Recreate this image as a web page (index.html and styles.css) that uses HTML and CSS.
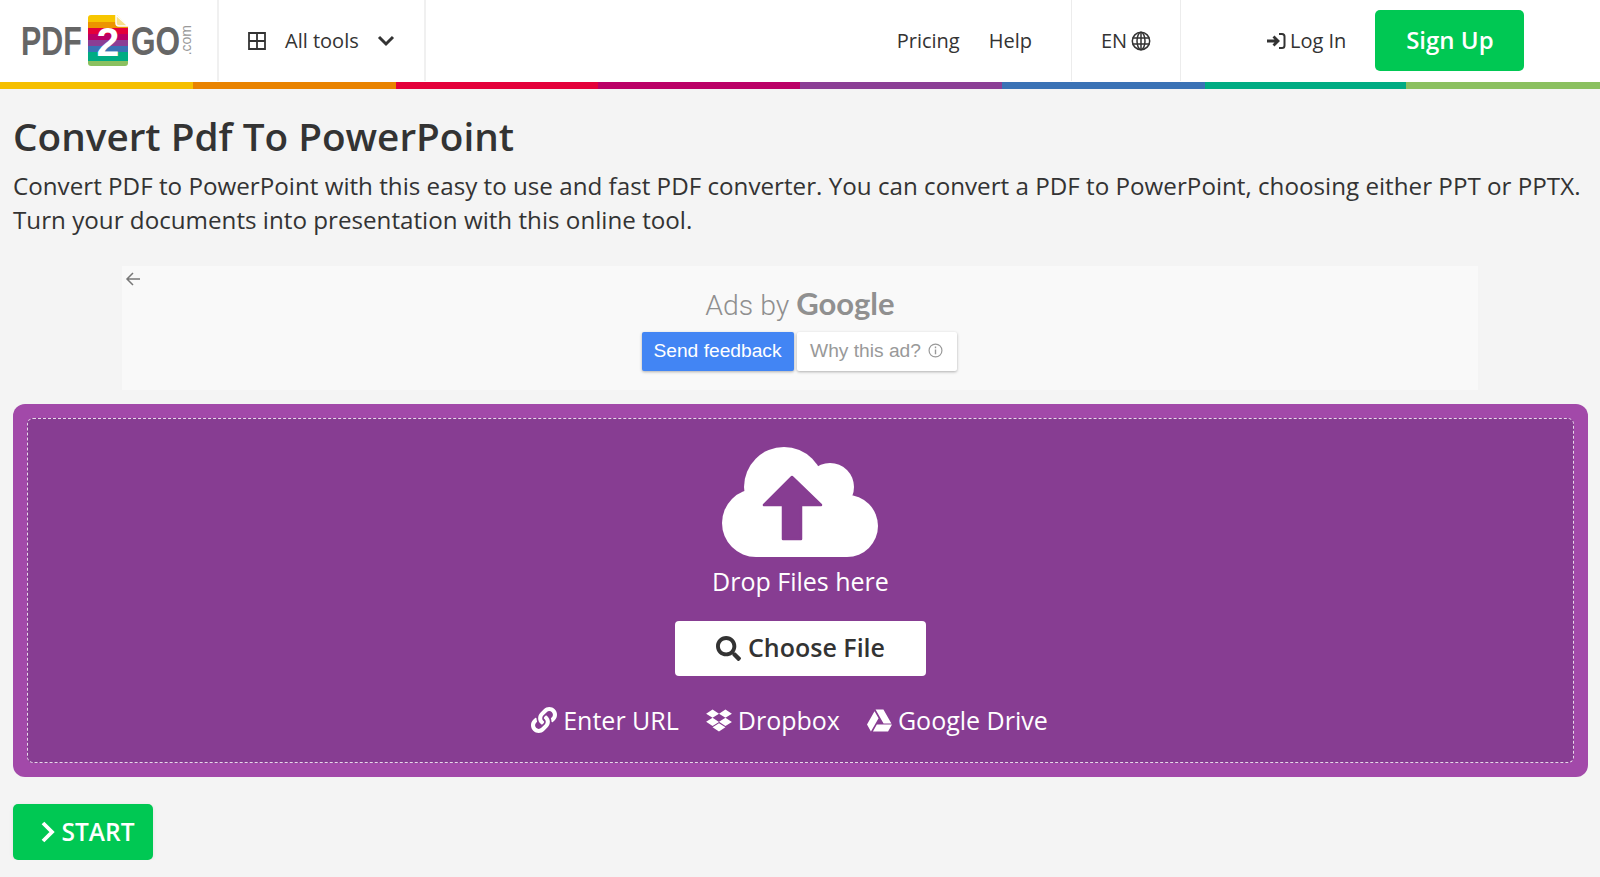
FILE: index.html
```html
<!DOCTYPE html>
<html lang="en">
<head>
<meta charset="utf-8">
<title>Convert Pdf To PowerPoint</title>
<link rel="stylesheet" href="styles.css">
</head>
<body>
<header class="topbar">
  <a class="logo-cell" href="#">
    <span class="logo-box logo-box-pdf"><span class="logo-word logo-pdf">PDF</span></span>
    <span class="logo-doc">
      <svg viewBox="0 0 40 51" width="40" height="51">
        <defs><clipPath id="doc"><path d="M0 3a3 3 0 0 1 3-3h26l11 11v37a3 3 0 0 1-3 3H3a3 3 0 0 1-3-3z"/></clipPath></defs>
        <g clip-path="url(#doc)">
          <rect width="40" height="7" fill="#f7c600"/>
          <rect y="7" width="40" height="6" fill="#ec9400"/>
          <rect y="13" width="40" height="6" fill="#e4003a"/>
          <rect y="19" width="40" height="6" fill="#bb0066"/>
          <rect y="25" width="40" height="6" fill="#8b3e95"/>
          <rect y="31" width="40" height="6" fill="#3a72b5"/>
          <rect y="37" width="40" height="9" fill="#00ac83"/>
          <rect y="46" width="40" height="5" fill="#8bc05f"/>
        </g>
        <path d="M28 0v8a3 3 0 0 0 3 3h9z" fill="#f7e08a" stroke="#fff" stroke-width="1.500"/>
      </svg>
      <span class="logo-two">2</span>
    </span>
    <span class="logo-box logo-box-go"><span class="logo-word logo-go">GO</span></span>
    <span class="logo-com">.com</span>
  </a>
  <button class="tools-cell" type="button">
    <svg class="ic-grid" viewBox="0 0 18 18" width="18" height="18"><path d="M1 1h16v16H1zM9 1v16M1 9h16" fill="none" stroke="#333" stroke-width="1.800"/></svg>
    <span>All tools</span>
    <svg class="ic-chev" viewBox="0 0 18 12" width="18" height="12"><path d="M2 2l7 7 7-7" fill="none" stroke="#333" stroke-width="3"/></svg>
  </button>
  <nav class="nav-links"><a href="#">Pricing</a><a href="#">Help</a></nav>
  <a class="lang-cell" href="#"><span class="lift">EN</span>
    <svg viewBox="0 0 20 20" width="20" height="20"><g fill="none" stroke="#333" stroke-width="1.500"><circle cx="10" cy="10" r="8.700"/><ellipse cx="10" cy="10" rx="4" ry="8.700"/><path d="M1.500 7h17M1.500 13h17M10 1.300v17.400"/></g></svg>
  </a>
  <div class="account">
    <a class="login" href="#">
      <svg viewBox="0 0 20 18" width="20" height="18"><path d="M1 9h10M7.500 4.500L12 9l-4.500 4.500" fill="none" stroke="#333" stroke-width="2.800"/><path d="M13 2h3a2.500 2.500 0 0 1 2.500 2.500v9A2.500 2.500 0 0 1 16 16h-3" fill="none" stroke="#333" stroke-width="2"/></svg>
      <span class="lift">Log In</span>
    </a>
    <a class="signup" href="#">Sign Up</a>
  </div>
</header>
<div class="stripes">
  <i class="s1"></i><i class="s2"></i><i class="s3"></i><i class="s4"></i><i class="s5"></i><i class="s6"></i><i class="s7"></i><i class="s8"></i>
</div>
<main class="content">
  <h1>Convert Pdf To PowerPoint</h1>
  <p class="lead">Convert PDF to PowerPoint with this easy to use and fast PDF converter. You can convert a PDF to PowerPoint, choosing either PPT or PPTX. Turn your documents into presentation with this online tool.</p>
  <section class="ad">
    <svg class="ad-back" viewBox="0 0 16 16" width="16" height="16"><path d="M15 8H2M8 2L2 8l6 6" fill="none" stroke="#777" stroke-width="1.500"/></svg>
    <div class="ad-title">Ads by <span>Google</span></div>
    <div class="ad-buttons">
      <button class="ad-send" type="button">Send feedback</button>
      <button class="ad-why" type="button">Why this ad?
        <svg viewBox="0 0 14 14" width="15" height="15"><circle cx="7" cy="7" r="6" fill="none" stroke="#999" stroke-width="1.100"/><path d="M7 6v4.500M7 3.300v1.500" stroke="#999" stroke-width="1.300"/></svg>
      </button>
    </div>
  </section>
  <section class="upload">
    <div class="drop">
      <svg class="cloud" viewBox="0 0 156 110" width="156" height="110">
        <g fill="#fff"><circle cx="62" cy="40" r="40"/><circle cx="108" cy="40" r="24"/><circle cx="34" cy="76" r="34"/><circle cx="125" cy="79" r="31"/><rect x="34" y="40" width="91" height="70"/></g>
        <path d="M70 30L42 58h19v34h18V58h20z" fill="#873d92" stroke="#873d92" stroke-width="2.500" stroke-linejoin="round"/>
      </svg>
      <div class="drop-label">Drop Files here</div>
      <button class="choose" type="button">
        <svg viewBox="0 0 512 512" width="25" height="25"><path fill="#333" d="M505 442.700L405.300 343c-4.500-4.500-10.600-7-17-7H372c27.600-35.300 44-79.700 44-128C416 93.100 322.900 0 208 0S0 93.100 0 208s93.100 208 208 208c48.300 0 92.700-16.400 128-44v16.300c0 6.400 2.500 12.500 7 17l99.700 99.700c9.400 9.400 24.600 9.400 33.900 0l28.300-28.300c9.400-9.400 9.400-24.600.1-34zM208 336c-70.700 0-128-57.200-128-128 0-70.700 57.200-128 128-128 70.700 0 128 57.200 128 128 0 70.700-57.200 128-128 128z"/></svg>
        <span class="lift-big">Choose File</span>
      </button>
      <div class="sources">
        <a href="#"><svg viewBox="0 0 512 512" width="26" height="26"><path fill="#fff" d="M326.612 185.391c59.747 59.809 58.927 155.698.36 214.590-.11.12-.24.25-.36.37l-67.200 67.200c-59.270 59.270-155.699 59.262-214.960 0-59.270-59.260-59.270-155.700 0-214.960l37.106-37.106c9.840-9.840 26.786-3.300 27.294 10.606.648 17.722 3.826 35.527 9.690 52.721 1.986 5.822.567 12.262-3.783 16.612l-13.087 13.087c-28.026 28.026-28.905 73.660-1.155 101.960 28.024 28.579 74.086 28.749 102.325.51l67.200-67.190c28.191-28.191 28.073-73.757 0-101.830-3.701-3.694-7.429-6.564-10.341-8.569a16.037 16.037 0 0 1-6.947-12.606c-.396-10.567 3.348-21.456 11.698-29.806l21.054-21.055c5.521-5.521 14.182-6.199 20.584-1.731a152.482 152.482 0 0 1 20.522 17.197zM467.547 44.449c-59.261-59.262-155.690-59.270-214.960 0l-67.200 67.200c-.12.12-.25.25-.36.37-58.566 58.892-59.387 154.781.36 214.590a152.454 152.454 0 0 0 20.521 17.196c6.402 4.468 15.064 3.789 20.584-1.731l21.054-21.055c8.350-8.350 12.094-19.239 11.698-29.806a16.037 16.037 0 0 0-6.947-12.606c-2.912-2.005-6.640-4.875-10.341-8.569-28.073-28.073-28.191-73.639 0-101.830l67.200-67.190c28.239-28.239 74.300-28.069 102.325.51 27.750 28.300 26.872 73.934-1.155 101.960l-13.087 13.087c-4.350 4.350-5.769 10.790-3.783 16.612 5.864 17.194 9.042 34.999 9.690 52.721.509 13.906 17.454 20.446 27.294 10.606l37.106-37.106c59.271-59.259 59.271-155.699.001-214.959z"/></svg>Enter URL</a>
        <a href="#"><svg viewBox="0 0 528 512" width="26" height="25"><path fill="#fff" d="M264.400 116.300l-132 84.300 132 84.300-132 84.300L0 284.100l132.300-84.300L0 116.300 132.300 32l132.100 84.300zM131.600 395.700l132-84.300 132 84.300-132 84.300-132-84.300zm132.800-111.600l132-84.300-132-83.600L395.700 32 528 116.300l-132.300 84.300L528 284.800l-132.300 84.300-131.300-85z"/></svg>Dropbox</a>
        <a href="#"><svg viewBox="0 0 512 512" width="25" height="25"><path fill="#fff" d="M339 314.900L175.400 32h161.200l163.600 282.900H339zm-137.500 23.600L120.900 480h310.500L512 338.500H201.500zM154.100 67.400L0 338.200 80.600 480 237 208.800 154.100 67.400z"/></svg>Google Drive</a>
      </div>
    </div>
  </section>
  <button class="start" type="button">
    <svg viewBox="0 0 14 22" width="14" height="22"><path d="M2 2l9 9-9 9" fill="none" stroke="#fff" stroke-width="3.800"/></svg>
    <span class="lift-start">START</span>
  </button>
</main>
</body>
</html>
```
FILE: styles.css
```css
* { box-sizing: border-box; }
html, body { margin: 0; padding: 0; }
body {
  background: #f4f4f4;
  color: #333;
  font-family: "Open Sans", "Liberation Sans", sans-serif;
  overflow: hidden;
}
a { color: inherit; text-decoration: none; }
button { font-family: inherit; border: 0; cursor: pointer; }
.lift { padding-bottom: 1px; }
.lift-start { padding-bottom: 2px; }
.lift-big { padding-bottom: 3px; }

.topbar { display: flex; align-items: stretch; height: 82px; padding-bottom: 1px; background: #fff; font-size: 20px; }
.logo-cell { width: 219px; display: flex; align-items: center; padding-left: 21px; border-right: 2px solid #f0f0f0; }
.logo-box { display: block; flex: none; height: 40px; }
.logo-box-pdf { width: 61px; }
.logo-box-go { width: 49px; }
.logo-word { display: inline-block; font: bold 40px/40px "Liberation Sans", sans-serif; color: #666; transform-origin: left center; white-space: nowrap; }
.logo-pdf { transform: scaleX(.76); }
.logo-go { transform: scaleX(.79); }
.logo-doc { position: relative; width: 40px; height: 51px; margin: 0 3px 0 6px; flex: none; }
.logo-doc svg { display: block; }
.logo-two { position: absolute; left: 0; right: 0; top: 4px; text-align: center; font: bold 41px/46px "Liberation Sans", sans-serif; color: #fff; }
.logo-com { writing-mode: vertical-rl; transform: rotate(180deg); font: 14px/9px "Liberation Sans", sans-serif; color: #999; margin-left: 2px; }
.tools-cell { width: 207px; display: flex; align-items: center; padding: 0 0 0 29px; background: none; color: #333; font-size: 20px; border-right: 2px solid #f0f0f0; }
.tools-cell span { margin-left: 19px; padding-bottom: 1px; }
.ic-chev { margin-left: 18px; }
.nav-links { margin-left: auto; display: flex; align-items: center; gap: 29px; padding: 0 39px 1px 0; }
.lang-cell { width: 110px; display: flex; align-items: center; gap: 4px; padding-left: 29px; border-left: 1px solid #ececec; border-right: 1px solid #ececec; }
.account { width: 419px; display: flex; align-items: center; padding-left: 85px; }
.login { display: flex; align-items: center; gap: 4px; }
.signup { margin-left: 29px; width: 149px; height: 61px; padding-bottom: 3px; display: flex; align-items: center; justify-content: center; background: #00c853; color: #fff; border-radius: 5px; font-size: 24px; font-weight: 600; }

.stripes { display: flex; height: 7px; }
.stripes i { display: block; }
.s1 { width: 193px; background: #f5bf00; }
.s2 { width: 203px; background: #e98300; }
.s3 { width: 202px; background: #e4003a; }
.s4 { width: 202px; background: #bb0066; }
.s5 { width: 202px; background: #8b3e95; }
.s6 { width: 203px; background: #3a72b5; }
.s7 { width: 201px; background: #00ac83; }
.s8 { flex: 1; background: #8bc05f; }

.content { padding: 0 12px 0 13px; }
h1 { margin: 22px 0 0; font-size: 38.700px; line-height: 50px; font-weight: 600; }
.lead { margin: 8px 0 0; font-size: 24.200px; line-height: 34px; }

.ad { position: relative; width: 1356px; height: 124px; margin: 29px 0 0 109px; padding-top: 19px; background: #f9f9f9; display: flex; flex-direction: column; align-items: center; font-family: "Liberation Sans", sans-serif; }
.ad-back { position: absolute; left: 3px; top: 5px; }
.ad-title { font-family: Roboto, "Liberation Sans", sans-serif; font-size: 28.400px; font-weight: 300; line-height: 36px; color: #8f8f8f; }
.ad-title span { font-family: Lato, Roboto, sans-serif; font-size: 31px; font-weight: 700; color: #909090; }
.ad-buttons { display: flex; gap: 3px; margin-top: 8px; transform: translateX(-1px); }
.ad-send, .ad-why { height: 39px; padding: 0 0 2px; font-size: 19.200px; border-radius: 2px; box-shadow: 0 1px 3px rgba(0,0,0,.3); display: flex; align-items: center; justify-content: center; font-family: "Liberation Sans", sans-serif; }
.ad-send { width: 152px; background: #4285f4; color: #fff; }
.ad-why { width: 160px; background: #fff; color: #999; gap: 7px; }

.upload { height: 373px; margin-top: 14px; padding: 14px; background: #a249a9; border-radius: 12px; }
.drop { height: 345px; background: #873d92; border: 1px dashed #e8d8ea; border-radius: 6px; display: flex; flex-direction: column; align-items: center; padding-top: 28px; color: #fff; }
.cloud { display: block; margin-left: -2px; }
.drop-label { margin-top: 7px; font-size: 25px; line-height: 34px; }
.choose { width: 251px; height: 55px; margin-top: 23px; background: #fff; color: #333; border-radius: 4px; font-size: 25px; font-weight: 600; display: flex; align-items: center; justify-content: center; gap: 7px; }
.sources { display: flex; gap: 27px; margin-top: 26px; padding-right: 22px; font-size: 25px; line-height: 36px; }
.sources a { display: flex; align-items: center; gap: 6px; }

.start { width: 140px; height: 56px; margin-top: 27px; padding: 0 0 0 9px; background: #00c853; color: #fff; border-radius: 5px; font-size: 24.500px; font-weight: 600; display: flex; align-items: center; justify-content: center; gap: 7px; box-shadow: 0 1px 4px rgba(0,0,0,.08); }
```
